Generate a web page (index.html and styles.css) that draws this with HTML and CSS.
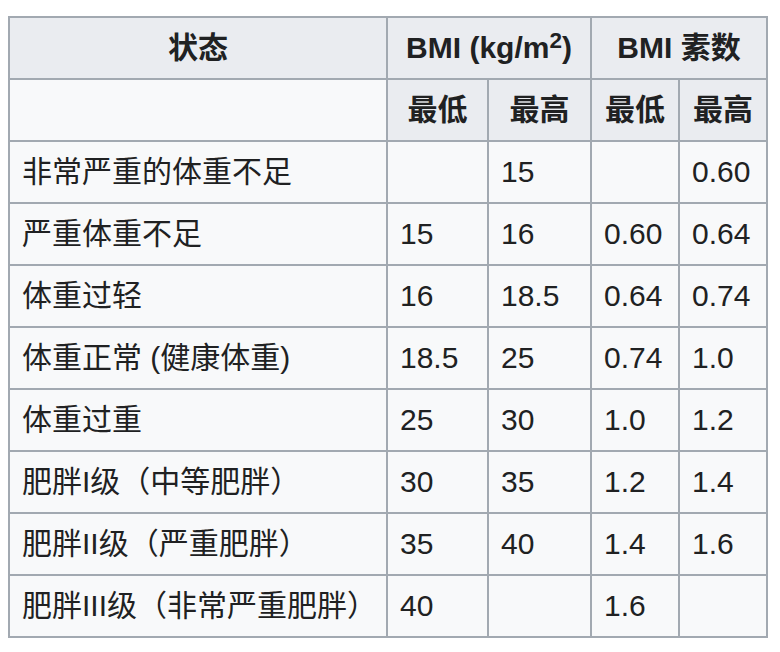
FILE: index.html
```html
<!DOCTYPE html>
<html lang="zh-CN">
<head>
<meta charset="utf-8">
<title>BMI</title>
<link rel="stylesheet" href="styles.css">
</head>
<body>
<table class="wikitable">
  <colgroup>
    <col class="c-state">
    <col class="c-bmi-lo">
    <col class="c-bmi-hi">
    <col class="c-f-lo">
    <col class="c-f-hi">
  </colgroup>
  <thead>
    <tr>
      <th>状态</th>
      <th colspan="2">BMI (kg/m<sup>2</sup>)</th>
      <th colspan="2">BMI 素数</th>
    </tr>
    <tr>
      <td class="blank"></td>
      <th>最低</th>
      <th>最高</th>
      <th>最低</th>
      <th>最高</th>
    </tr>
  </thead>
  <tbody>
    <tr><td>非常严重的体重不足</td><td></td><td>15</td><td></td><td>0.60</td></tr>
    <tr><td>严重体重不足</td><td>15</td><td>16</td><td>0.60</td><td>0.64</td></tr>
    <tr><td>体重过轻</td><td>16</td><td>18.5</td><td>0.64</td><td>0.74</td></tr>
    <tr><td>体重正常 (健康体重)</td><td>18.5</td><td>25</td><td>0.74</td><td>1.0</td></tr>
    <tr><td>体重过重</td><td>25</td><td>30</td><td>1.0</td><td>1.2</td></tr>
    <tr><td>肥胖I级（中等肥胖）</td><td>30</td><td>35</td><td>1.2</td><td>1.4</td></tr>
    <tr><td>肥胖II级（严重肥胖）</td><td>35</td><td>40</td><td>1.4</td><td>1.6</td></tr>
    <tr><td>肥胖III级（非常严重肥胖）</td><td>40</td><td></td><td>1.6</td><td></td></tr>
  </tbody>
</table>
</body>
</html>
```

FILE: styles.css
```css
html, body {
  margin: 0;
  padding: 0;
  background: #ffffff;
}
body {
  padding: 16px 8px;
  font-family: "Liberation Sans", Arial, "Noto Sans CJK SC", sans-serif;
  color: #202122;
}
.wikitable {
  border-collapse: collapse;
  table-layout: fixed;
  width: 760px;
  background: #f8f9fa;
  border: 2px solid #a2a9b1;
  font-size: 30px;
  line-height: 48px;
}
.c-state { width: 378px; }
.c-bmi-lo { width: 101px; }
.c-bmi-hi { width: 103px; }
.c-f-lo { width: 88px; }
.c-f-hi { width: 88px; }
.wikitable th,
.wikitable td {
  border: 2px solid #a2a9b1;
  padding: 6px 12px;
  height: 48px;
  white-space: nowrap;
  text-align: left;
  vertical-align: middle;
}
.wikitable th {
  background: #eaecf0;
  font-weight: bold;
  text-align: center;
}
.wikitable td.blank {
  background: #f8f9fa;
}
.wikitable sup {
  font-size: 0.75em;
  line-height: 1;
  vertical-align: 0.45em;
}
```
